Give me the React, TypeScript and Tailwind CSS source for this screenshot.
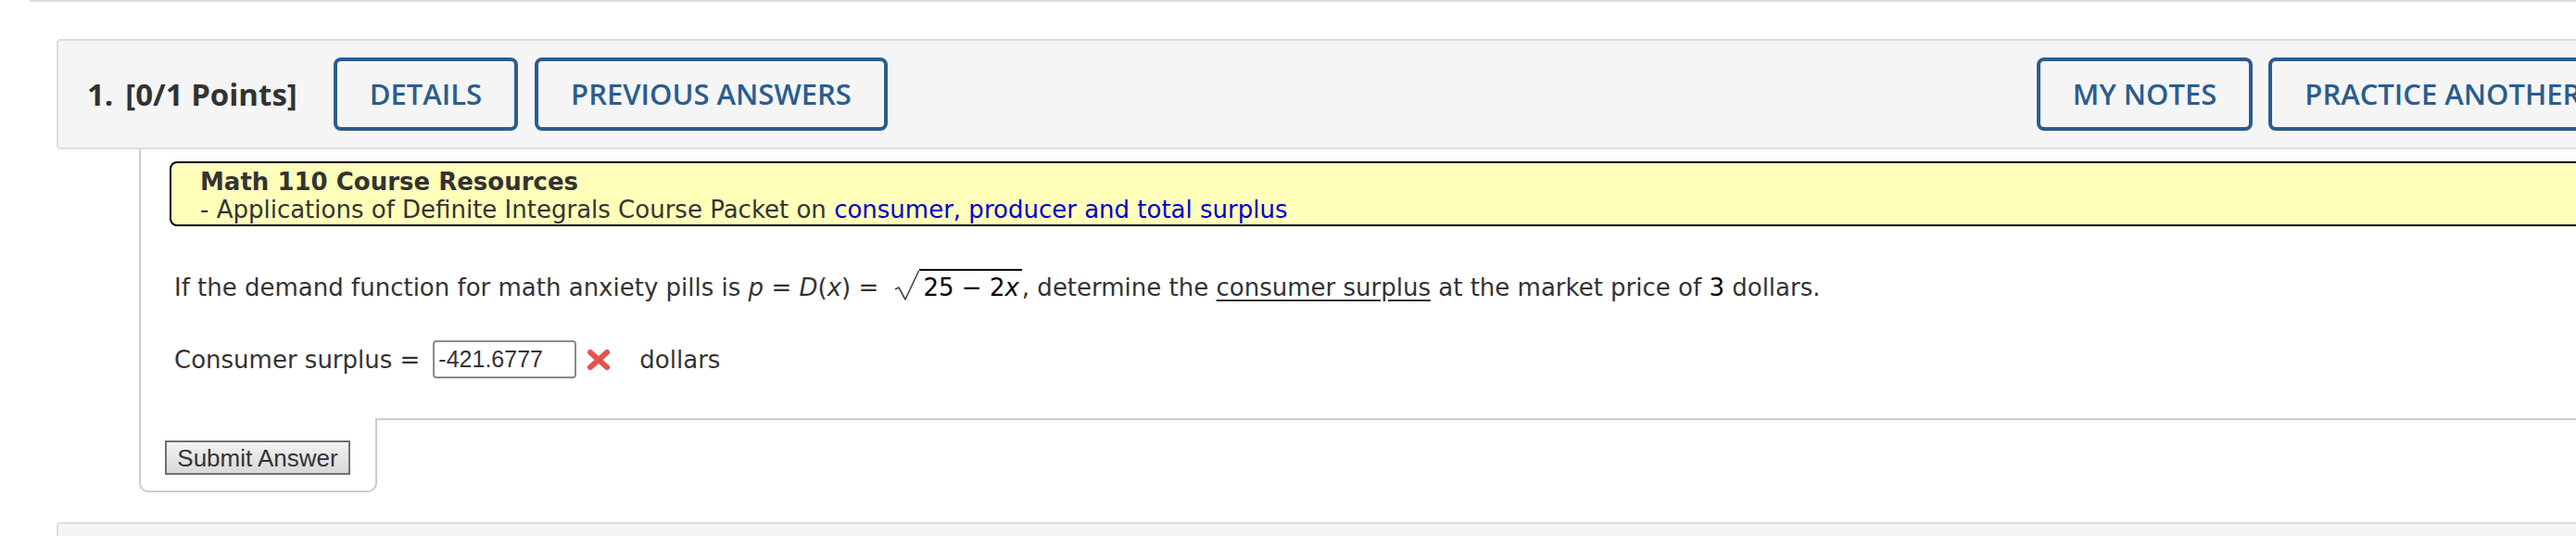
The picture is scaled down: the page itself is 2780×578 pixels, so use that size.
import React from 'react';

const HeaderButton: React.FC<{ label: string; className?: string }> = ({ label, className = '' }) => (
  <div
    className={
      'h-[79px] px-[35px] flex items-center rounded-[8px] border-[4px] border-[#2a5d8e] text-[#2a5d8e] text-[31px] font-semibold whitespace-nowrap ' +
      className
    }
  >
    {label}
  </div>
);

const Radical: React.FC = () => (
  <svg className="inline-block align-[-6px] ml-[8px]" width="27" height="34" viewBox="0 0 27 34" fill="none">
    <path d="M1 21 L5 19 L12 32 L26.5 1" stroke="#444" strokeWidth="1.6" strokeLinejoin="round" />
  </svg>
);

const WrongMark: React.FC = () => (
  <svg width="28" height="24" viewBox="0 0 28 24">
    <path d="M5 4 L23 20 M23 4 L5 20" stroke="#e25450" strokeWidth="6" strokeLinecap="round" />
  </svg>
);

const App: React.FC = () => {
  return (
    <div className="w-[2780px] h-[578px] overflow-hidden bg-white">
      {/* previous question edge */}
      <div className="ml-[32px] h-[2px] bg-[#dcdcdc]" />

      <div className="ml-[61px] mt-[40px] w-[3000px]">
        {/* question header */}
        <div className="h-[119px] flex items-center pl-[31px] bg-[#f5f5f5] border-2 border-[#dedede] rounded-[4px] font-['Open_Sans',sans-serif]">
          <span className="text-[33px] font-bold text-[#333]">1.</span>
          <span className="ml-[13px] text-[33px] font-bold text-[#333]">[0/1 Points]</span>
          <HeaderButton label="DETAILS" className="ml-[39px]" />
          <HeaderButton label="PREVIOUS ANSWERS" className="ml-[18px]" />
          <HeaderButton label="MY NOTES" className="ml-[1240px]" />
          <HeaderButton label="PRACTICE ANOTHER" className="ml-[17px]" />
        </div>

        {/* question body */}
        <div className="ml-[89px] font-['DejaVu_Sans',Verdana,sans-serif] text-[#333]">
          <div className="border-l-2 border-[#cccccc] pl-[31px] pt-[13px] pb-[43px]">
            <div className="border-2 border-black rounded-[8px] bg-[#ffffb9] pl-[31px] pt-[5px] pb-[1px]">
              <div className="text-[26px] leading-[30px] font-bold">Math 110 Course Resources</div>
              <div className="text-[26px] leading-[30px]">
                - Applications of Definite Integrals Course Packet on{' '}
                <span className="text-[#0000cc]">consumer, producer and total surplus</span>
              </div>
            </div>

            <p className="mt-[47px] pl-[5px] text-[26px] leading-[30px]">
              If the demand function for math anxiety pills is <i>p</i> = <i>D</i>(<i>x</i>) ={' '}
              <Radical />
              <span className="border-t-2 border-black pt-[3px] pl-[5px] pr-[3px] text-black">
                25 − 2<i>x</i>
              </span>
              , determine the <span className="underline underline-offset-[4px]">consumer surplus</span> at the market
              price of <span className="text-black">3</span> dollars.
            </p>

            <div className="mt-[42px] pl-[5px] flex items-center text-[26px] leading-[30px]">
              <span>Consumer surplus =</span>
              <input
                readOnly
                defaultValue="-421.6777"
                className="ml-[14px] w-[155px] h-[41px] pl-[4px] border-2 border-[#8a8a8a] rounded-[4px] bg-white text-[25px] text-[#333] font-['Liberation_Sans',Arial,sans-serif] outline-none"
              />
              <span className="ml-[10px]">
                <WrongMark />
              </span>
              <span className="ml-[30px]">dollars</span>
            </div>
          </div>

          {/* submit tab */}
          <div className="flex">
            <div className="w-[257px] h-[80px] border-l-2 border-r-2 border-b-2 border-[#cccccc] rounded-b-[10px] pl-[26px] pt-[24px]">
              <button className="w-[200px] h-[37px] border-2 border-[#707070] bg-gradient-to-b from-[#f2f2f2] to-[#d9d9d9] text-[26px] leading-none text-[#333] font-['Liberation_Sans',Arial,sans-serif]">
                Submit Answer
              </button>
            </div>
            <div className="flex-1 border-t-2 border-[#cccccc]" />
          </div>
        </div>

        {/* next question */}
        <div className="mt-[32px] h-[60px] bg-[#f5f5f5] border-2 border-[#dedede] rounded-[4px]" />
      </div>
    </div>
  );
};

export default App;
